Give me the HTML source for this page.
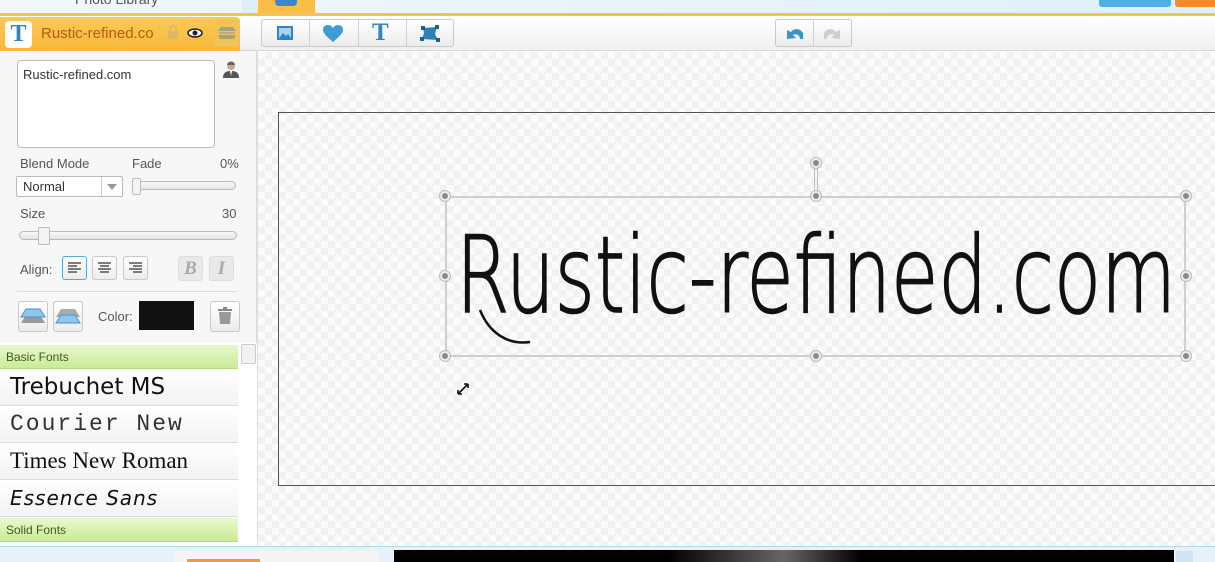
<!DOCTYPE html>
<html><head><meta charset="utf-8"><style>
*{box-sizing:border-box;margin:0;padding:0}
body{width:1215px;height:562px;overflow:hidden;position:relative;background:#fff;font-family:"Liberation Sans","DejaVu Sans",sans-serif;font-size:13px;color:#444}
.abs{position:absolute}
.checker{background-color:#fbfbfb;background-image:linear-gradient(45deg,#f1f1f1 25%,transparent 25%,transparent 75%,#f1f1f1 75%),linear-gradient(45deg,#f1f1f1 25%,transparent 25%,transparent 75%,#f1f1f1 75%);background-size:14px 14px;background-position:0 0,7px 7px}
.btn{position:absolute;border:1px solid #c9c9c9;border-radius:3px;background:linear-gradient(#fff,#ececec)}
.fontrow{position:absolute;left:0;width:238px;height:37px;border-bottom:1px solid #ddd;background:linear-gradient(#fff,#f3f3f3);color:#111;padding-left:10px;line-height:36px;white-space:nowrap}
.grp{position:absolute;left:0;width:238px;height:24px;background:linear-gradient(#e9f8cf,#c9ec95);color:#3c5a20;font-size:12px;line-height:24px;padding-left:6px;border-bottom:1px solid #b5d884}
.handle{position:absolute;width:10px;height:10px;border-radius:50%;background:#8a8a8a;border:2px solid #eee;box-shadow:0 0 0 1px #bbb}
</style></head><body>
<div class="abs" style="left:0;top:0;width:1215px;height:13px;background:linear-gradient(90deg,#f2f8fc,#e6f3fb 60%,#def0fa)"></div>
<div class="abs" style="left:75px;top:-9px;font-size:14px;color:#555">Photo Library</div>
<div class="abs" style="left:242px;top:0;width:16px;height:13px;background:#dceefa"></div>
<div class="abs" style="left:258px;top:0;width:57px;height:13px;background:#f9be45"></div>
<div class="abs" style="left:275px;top:0;width:22px;height:6px;background:#3d86cc;border-radius:0 0 4px 4px"></div>
<div class="abs" style="left:1099px;top:0;width:72px;height:7px;background:#4fb0e6;border-radius:0 0 3px 3px"></div>
<div class="abs" style="left:1175px;top:0;width:40px;height:7px;background:#f98a2c;border-radius:0 0 0 3px"></div>
<div class="abs" style="left:0;top:13px;width:1215px;height:3px;background:#f5c14f"></div>
<div class="abs" style="left:240px;top:16px;width:975px;height:35px;background:linear-gradient(#fff,#f0f0f0);border-bottom:1px solid #d8d8d8"></div>
<div class="btn" style="left:261px;top:19px;width:193px;height:28px"></div>
<div class="abs" style="left:309px;top:20px;width:1px;height:26px;background:#d0d0d0"></div>
<div class="abs" style="left:358px;top:20px;width:1px;height:26px;background:#d0d0d0"></div>
<div class="abs" style="left:406px;top:20px;width:1px;height:26px;background:#d0d0d0"></div>
<svg class="abs" style="left:276px;top:25px" width="18" height="16"><rect x="1" y="1" width="16" height="14" fill="#2d86c6"/><rect x="3" y="3" width="12" height="10" fill="#a9d3ef"/><path d="M3 13 L7 8 L10 11 L12 9 L15 13Z" fill="#2d86c6"/></svg>
<svg class="abs" style="left:322px;top:24px" width="22" height="19"><path d="M11 18 C4 12 1 9 1 5.5 C1 2.5 3.5 1 6 1 C8.5 1 10 2.5 11 4 C12 2.5 13.5 1 16 1 C18.5 1 21 2.5 21 5.5 C21 9 18 12 11 18Z" fill="#3f9ad8"/></svg>
<div class="abs" style="left:372px;top:19px;font-family:'Liberation Serif',serif;font-size:25px;font-weight:bold;color:#2d86c6">T</div>
<svg class="abs" style="left:420px;top:25px" width="20" height="17"><path d="M3 3 L17 2 L15 9 L18 15 L2 14 L4 8Z" fill="#2f7fb8"/><rect x="1" y="1" width="4" height="4" fill="#1d5f90"/><rect x="15" y="0" width="4" height="4" fill="#1d5f90"/><rect x="0" y="12" width="4" height="4" fill="#1d5f90"/><rect x="16" y="13" width="4" height="4" fill="#1d5f90"/></svg>
<div class="btn" style="left:775px;top:19px;width:77px;height:28px"></div>
<div class="abs" style="left:813px;top:20px;width:1px;height:26px;background:#d0d0d0"></div>
<svg class="abs" style="left:785px;top:26px" width="20" height="14"><path d="M2 13 L2 4 L6 6 C9 2 15 2 18 7 L18 13 L15 13 C15 9 11 7 8 9 L11 12Z" fill="#3b93c9"/></svg>
<svg class="abs" style="left:822px;top:26px" width="20" height="14"><path d="M18 13 L18 4 L14 6 C11 2 5 2 2 7 L2 13 L5 13 C5 9 9 7 12 9 L9 12Z" fill="#cfcfcf"/></svg>
<div class="abs" style="left:0;top:51px;width:257px;height:292px;background:#f7f7f7;border-right:1px solid #ddd"></div>
<div class="abs" style="left:257px;top:51px;width:1px;height:495px;background:#ddd"></div>
<div class="abs" style="left:0;top:17px;width:240px;height:34px;background:linear-gradient(#fbc95a,#f7b938);border-radius:0 4px 0 0"></div>
<div class="abs" style="left:5px;top:21px;width:27px;height:27px;background:#fff;border-radius:4px;font-family:'Liberation Serif',serif;font-weight:bold;font-size:24px;color:#2f86c8;text-align:center;line-height:27px">T</div>
<div class="abs" style="left:41px;top:25px;font-size:15px;color:#b55a10">Rustic-refined.co</div>
<svg class="abs" style="left:167px;top:25px" width="12" height="15"><rect x="1" y="6" width="10" height="8" fill="#e0b863"/><path d="M3 6 V4 A3 3 0 0 1 9 4 V6" stroke="#e0b863" stroke-width="2" fill="none"/></svg>
<svg class="abs" style="left:187px;top:28px" width="16" height="10"><ellipse cx="8" cy="5" rx="7" ry="4" fill="#fff" stroke="#222" stroke-width="1.5"/><circle cx="8" cy="5" r="2.5" fill="#222"/></svg>
<div class="abs" style="left:214px;top:19px;width:25px;height:28px;background:#f1c455;border-radius:3px"></div>
<svg class="abs" style="left:217px;top:26px" width="20" height="14"><path d="M4 1 H16 L19 5 H1Z" fill="#a6a27a"/><path d="M2 6 H18 V8 H2Z" fill="#b4b08c"/><path d="M1 9 H19 L17 13 H3Z" fill="#a6a27a"/></svg>
<div class="abs" style="left:17px;top:60px;width:198px;height:88px;background:#fff;border:1px solid #bbb;border-radius:4px;padding:6px 5px;font-size:13px;color:#333">Rustic-refined.com</div>
<svg class="abs" style="left:222px;top:61px" width="18" height="18"><circle cx="9" cy="5" r="4" fill="#c9a78a"/><path d="M5 4 A4 3.5 0 0 1 13 4 Z" fill="#666"/><path d="M1 17 C1 11 5 10 9 10 C13 10 17 11 17 17Z" fill="#555"/><path d="M8 10 L10 10 L9 15Z" fill="#fff"/></svg>
<div class="abs" style="left:20px;top:156px;font-size:13px;color:#555">Blend Mode</div>
<div class="abs" style="left:132px;top:156px;font-size:13px;color:#555">Fade</div>
<div class="abs" style="left:220px;top:156px;font-size:13px;color:#555">0%</div>
<div class="abs" style="left:16px;top:176px;width:107px;height:21px;background:#fff;border:1px solid #bbb;border-radius:2px;padding:2px 6px;font-size:13px;color:#333">Normal</div>
<div class="abs" style="left:101px;top:177px;width:1px;height:19px;background:#ccc"></div>
<div class="abs" style="left:107px;top:184px;border:5px solid transparent;border-top:6px solid #999"></div>
<div class="abs" style="left:133px;top:181px;width:103px;height:9px;border:1px solid #bbb;border-radius:5px;background:linear-gradient(#f7f7f7,#e5e5e5)"></div>
<div class="abs" style="left:132px;top:178px;width:9px;height:17px;border:1px solid #bbb;border-radius:2px;background:#f4f4f4"></div>
<div class="abs" style="left:20px;top:206px;font-size:13px;color:#555">Size</div>
<div class="abs" style="left:222px;top:206px;font-size:13px;color:#555">30</div>
<div class="abs" style="left:19px;top:231px;width:218px;height:9px;border:1px solid #bbb;border-radius:5px;background:linear-gradient(#f7f7f7,#e5e5e5)"></div>
<div class="abs" style="left:38px;top:227px;width:12px;height:18px;border:1px solid #bbb;border-radius:2px;background:#f4f4f4"></div>
<div class="abs" style="left:20px;top:262px;font-size:13px;color:#555">Align:</div>
<div class="btn" style="left:62px;top:256px;width:25px;height:24px;border-color:#5aa5dc"></div>
<div class="btn" style="left:92px;top:256px;width:25px;height:24px"></div>
<div class="btn" style="left:123px;top:256px;width:25px;height:24px"></div>
<svg class="abs" style="left:68px;top:262px" width="14" height="12"><path d="M0 1H13M0 4H9M0 7H13M0 10H9" stroke="#333" stroke-width="1.3"/></svg>
<svg class="abs" style="left:98px;top:262px" width="14" height="12"><path d="M0 1H13M2 4H11M0 7H13M2 10H11" stroke="#333" stroke-width="1.3"/></svg>
<svg class="abs" style="left:129px;top:262px" width="14" height="12"><path d="M0 1H13M4 4H13M0 7H13M4 10H13" stroke="#333" stroke-width="1.3"/></svg>
<div class="abs" style="left:178px;top:256px;width:25px;height:25px;background:#e9e9e9;border-radius:3px;border:1px solid #ddd;font-family:'Liberation Serif',serif;font-weight:bold;font-style:italic;font-size:19px;color:#aaa;text-align:center;line-height:24px">B</div>
<div class="abs" style="left:209px;top:256px;width:25px;height:25px;background:#e9e9e9;border-radius:3px;border:1px solid #ddd;font-family:'Liberation Serif',serif;font-weight:bold;font-style:italic;font-size:19px;color:#aaa;text-align:center;line-height:24px">I</div>
<div class="abs" style="left:17px;top:291px;width:220px;height:1px;background:#ddd"></div>
<div class="btn" style="left:18px;top:301px;width:30px;height:31px"></div>
<div class="btn" style="left:53px;top:301px;width:30px;height:31px"></div>
<svg class="abs" style="left:20px;top:307px" width="26" height="20"><path d="M6 8 H20 L25 16 H1Z" fill="#9a9a9a"/><path d="M6 2 H20 L25 10 H1Z" fill="#8fc6ee" stroke="#4a93cc"/></svg>
<svg class="abs" style="left:55px;top:307px" width="26" height="20"><path d="M6 2 H20 L25 10 H1Z" fill="#aaa"/><path d="M6 8 H20 L25 16 H1Z" fill="#8fc6ee" stroke="#4a93cc"/></svg>
<div class="abs" style="left:98px;top:309px;font-size:13px;color:#555">Color:</div>
<div class="abs" style="left:139px;top:301px;width:55px;height:29px;background:#111"></div>
<div class="btn" style="left:210px;top:301px;width:30px;height:31px"></div>
<svg class="abs" style="left:218px;top:307px" width="14" height="18"><rect x="0" y="2" width="14" height="2" fill="#888"/><rect x="5" y="0" width="4" height="2" fill="#888"/><path d="M1 5 H13 L12 17 H2Z" fill="#999"/></svg>
<div class="abs" style="left:0;top:343px;width:257px;height:203px;background:#fff"></div>
<div class="grp" style="top:345px">Basic Fonts</div>
<div class="fontrow" style="top:369px;font-family:'DejaVu Sans',sans-serif;font-size:23px">Trebuchet MS</div>
<div class="fontrow" style="top:406px;font-family:'Liberation Mono',monospace;font-size:23px;color:#333;letter-spacing:2px">Courier New</div>
<div class="fontrow" style="top:443px;font-family:'Liberation Serif',serif;font-size:23px">Times New Roman</div>
<div class="fontrow" style="top:480px;font-family:'DejaVu Sans',sans-serif;font-style:italic;font-size:20px;letter-spacing:1px;font-weight:200">Essence Sans</div>
<div class="grp" style="top:518px">Solid Fonts</div>
<div class="abs" style="left:241px;top:344px;width:15px;height:20px;border:1px solid #ccc;border-radius:2px;background:#f2f2f2"></div>
<div class="abs checker" style="left:258px;top:52px;width:957px;height:494px"></div>
<div class="abs" style="left:278px;top:112px;width:940px;height:374px;border:1px solid #555;background:transparent"></div>
<div class="abs" style="left:445px;top:196px;width:741px;height:161px;border:2px solid #cfcfcf"></div>
<div class="abs" style="left:814px;top:164px;width:4px;height:33px;border-left:1px solid #bbb;border-right:1px solid #bbb"></div>
<div class="handle" style="left:811px;top:158px"></div>
<div class="handle" style="left:440px;top:191px"></div>
<div class="handle" style="left:811px;top:191px"></div>
<div class="handle" style="left:1181px;top:191px"></div>
<div class="handle" style="left:440px;top:271px"></div>
<div class="handle" style="left:1181px;top:271px"></div>
<div class="handle" style="left:440px;top:351px"></div>
<div class="handle" style="left:811px;top:351px"></div>
<div class="handle" style="left:1181px;top:351px"></div>
<svg class="abs" style="left:450px;top:210px" width="735" height="140"><text x="6" y="102" textLength="720" lengthAdjust="spacingAndGlyphs" font-family="DejaVu Sans" font-weight="200" font-size="106" fill="#111" stroke="#111" stroke-width="1.6">Rustic-refined.com</text><path d="M30 100 C40 125 60 135 80 132" stroke="#111" stroke-width="2.5" fill="none"/></svg>
<svg class="abs" style="left:456px;top:382px" width="14" height="14"><path d="M2 12 L12 2 M2 12 V8 M2 12 H6 M12 2 H8 M12 2 V6" stroke="#111" stroke-width="1.6" fill="none"/></svg>
<div class="abs" style="left:0;top:546px;width:1215px;height:16px;background:#e6f2fa;border-top:1px solid #b5d9ea"></div>
<div class="abs" style="left:174px;top:551px;width:205px;height:11px;background:#f5f5f5;border-radius:3px 3px 0 0"></div>
<div class="abs" style="left:187px;top:559px;width:73px;height:3px;background:#f39a35"></div>
<div class="abs" style="left:394px;top:550px;width:780px;height:12px;background:linear-gradient(90deg,#000 35%,#666 50%,#000 60%)"></div>
<div class="abs" style="left:1176px;top:551px;width:17px;height:11px;background:#cfe3f3"></div>
</body></html>
